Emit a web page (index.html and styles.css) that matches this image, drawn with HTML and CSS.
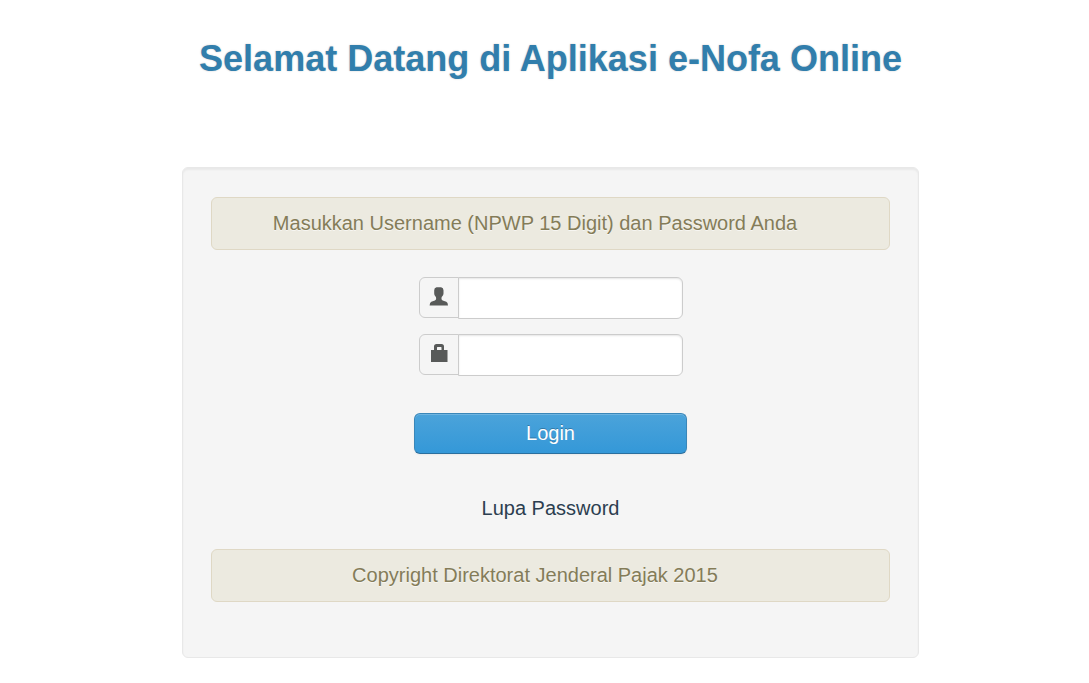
FILE: index.html
```
<!doctype html>
<html lang="id">
    <head>
        <meta charset="UTF-8" />
        <meta name="viewport" content="width=device-width, initial-scale=1.0" />
        <title>e-Nofa Online</title>
        <link rel="stylesheet" href="styles.css">
    </head>
    <body>
        <header>
            <h1>Selamat Datang di Aplikasi e-Nofa Online</h1>
        </header>

        <main class="well">
            <div class="alert">Masukkan Username (NPWP 15 Digit) dan Password Anda</div>

            <form class="login-form" action="#" method="post">
                <div class="input-prepend">
                    <label class="add-on" for="username" aria-label="Username">
                        <svg width="20" height="20" viewBox="0 0 20 20" aria-hidden="true">
                            <path d="M7.5 1.2h4.6q2.4.6 2.4 3v3.3q0 1.8-1.2 2.8-.8.6-.8 1.6v1.2q0 .8 1.2 1.3l3.6 1.3q1.6.8 1.7 3.8H.6q.1-3 1.7-3.8l3.6-1.3q1.2-.5 1.2-1.3v-1.2q0-1-.8-1.6Q5.2 9.300 5.200 7.500V4.200q0-2.400 2.300-3z" />
                        </svg>
                    </label>
                    <input type="text" id="username" name="username" />
                </div>
                <div class="input-prepend">
                    <label class="add-on" for="password" aria-label="Password">
                        <svg width="20" height="20" viewBox="0 0 20 20" aria-hidden="true">
                            <path fill-rule="evenodd" d="M5 7V3.500Q5 1 7.500 1h5Q15 1 15 3.500V7h3.500v12H2V7zM8 7h4.500V4.500Q12.500 4 12 4H8.500Q8 4 8 4.500z" />
                        </svg>
                    </label>
                    <input type="password" id="password" name="password" />
                </div>
                <button type="submit" class="btn">Login</button>
                <a href="#" class="forgot">Lupa Password</a>
            </form>

            <div class="alert">Copyright Direktorat Jenderal Pajak 2015</div>
        </main>
    </body>
</html>
```
FILE: styles.css
```
* {
    box-sizing: border-box;
}

body {
    margin: 0;
    padding: 31px 0 24px 12px;
    background-color: #fff;
    font-family: "Liberation Sans", Arial, sans-serif;
    font-size: 20px;
    line-height: 28px;
    color: #2c3e50;
}

header {
    margin-bottom: 80px;
    text-align: center;
}

h1 {
    margin: 0;
    font-size: 36px;
    line-height: 56px;
    color: #317eac;
    text-shadow: 0 0 2px rgba(0, 0, 0, 0.2);
}

.well {
    max-width: 737px;
    margin: 0 auto;
    padding: 29px 28px 28px;
    background-color: #f5f5f5;
    border: 1px solid #e8e8e8;
    border-radius: 6px;
    box-shadow: inset 0 2px 2px rgba(0, 0, 0, 0.05);
}

.alert {
    margin-bottom: 27px;
    padding: 11px 45px 12px 14px;
    background-color: #eceae0;
    border: 1px solid #dfd8c5;
    border-radius: 6px;
    color: #847c58;
    text-align: center;
    text-shadow: 0 1px 0 rgba(255, 255, 255, 0.6);
}

.login-form {
    display: flex;
    flex-direction: column;
    align-items: center;
}

.input-prepend {
    display: flex;
    align-items: flex-start;
    margin-bottom: 15px;
}

.add-on {
    display: flex;
    justify-content: center;
    width: 40px;
    height: 41px;
    padding-top: 8px;
    background-color: #f5f5f5;
    border: 1px solid #ccc;
    border-radius: 6px 0 0 6px;
}

.add-on svg {
    fill: #585a59;
}

.input-prepend input {
    width: 225px;
    height: 42px;
    margin-left: -1px;
    padding: 6px 8px;
    border: 1px solid #ccc;
    border-radius: 0 6px 6px 0;
    background-color: #fff;
    box-shadow: inset 0 1px 2px rgba(0, 0, 0, 0.1);
    font: inherit;
    color: #555;
}

.btn {
    width: 273px;
    height: 41px;
    margin: 22px 0 40px;
    padding: 0 0 2px;
    border: 1px solid #3a87b9;
    border-bottom-color: #2a6f9e;
    border-radius: 6px;
    background-image: linear-gradient(#4ba3da, #3498d8);
    box-shadow:
        inset 0 1px 0 rgba(255, 255, 255, 0.2),
        0 1px 2px rgba(0, 0, 0, 0.05);
    font: inherit;
    color: #fff;
    text-shadow: 0 -1px 0 rgba(0, 0, 0, 0.25);
    cursor: pointer;
}

.btn:hover {
    background-image: none;
    background-color: #3498d8;
}

.forgot {
    margin-bottom: 27px;
    color: #2c3e50;
    text-decoration: none;
}

.forgot:hover {
    text-decoration: underline;
}
```
